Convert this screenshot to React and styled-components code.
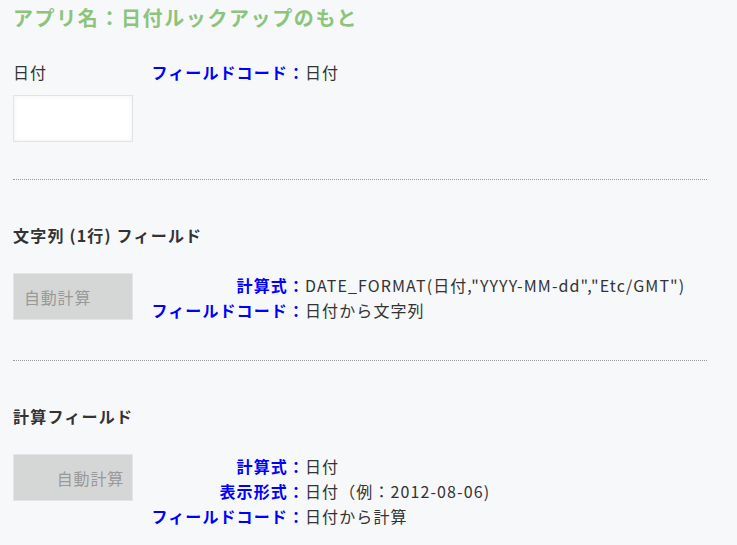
import styled, { createGlobalStyle } from "styled-components";

const GlobalStyle = createGlobalStyle`
  html, body {
    margin: 0;
    padding: 0;
    background: #f7f8fa;
  }
  body {
    font-family: "Noto Sans CJK JP", "Noto Sans", sans-serif;
    color: #333;
  }
`;

const sections = [
  {
    label: "日付",
    box: "input",
    info: [{ key: "フィールドコード", value: "日付" }],
  },
  {
    title: "文字列 (1行) フィールド",
    box: "calc",
    align: "left",
    info: [
      { key: "計算式", value: 'DATE_FORMAT(日付,"YYYY-MM-dd","Etc/GMT")' },
      { key: "フィールドコード", value: "日付から文字列" },
    ],
  },
  {
    title: "計算フィールド",
    box: "calc",
    align: "right",
    info: [
      { key: "計算式", value: "日付" },
      { key: "表示形式", value: "日付（例：2012-08-06)" },
      { key: "フィールドコード", value: "日付から計算" },
    ],
  },
];

const App = () => {
  return (
    <Page>
      <GlobalStyle />
      <AppTitle>アプリ名：日付ルックアップのもと</AppTitle>
      {sections.map((s, i) => (
        <Section key={i} $first={i === 0}>
          {s.title && <SectionTitle>{s.title}</SectionTitle>}
          <Row>
            <Field>
              {s.label && <FieldLabel>{s.label}</FieldLabel>}
              {s.box === "input" ? (
                <InputBox />
              ) : (
                <CalcBox $align={s.align}>自動計算</CalcBox>
              )}
            </Field>
            <Info>
              {s.info.map((it) => (
                <InfoLine key={it.key}>
                  <InfoKey>{it.key}：</InfoKey>
                  <InfoValue>{it.value}</InfoValue>
                </InfoLine>
              ))}
            </Info>
          </Row>
          {i < sections.length - 1 && <Divider />}
        </Section>
      ))}
    </Page>
  );
};

export default App;

const Page = styled.div`
  padding: 4px 0 0 13px;
  width: 694px;
`;

const AppTitle = styled.h1`
  margin: 0;
  font-size: 20px;
  line-height: 28px;
  font-weight: bold;
  letter-spacing: 1.6px;
  color: #8cc47c;
`;

const Section = styled.div`
  padding-top: ${(p) => (p.$first ? "28px" : "43px")};
`;

const SectionTitle = styled.div`
  font-size: 16px;
  line-height: 25px;
  font-weight: bold;
  letter-spacing: 1.2px;
  color: #333;
  margin-bottom: 25px;
`;

const Row = styled.div`
  display: flex;
  align-items: flex-start;
  margin-bottom: 37px;
`;

const Field = styled.div`
  display: flex;
  flex-direction: column;
  width: 120px;
`;

const FieldLabel = styled.div`
  font-size: 16px;
  line-height: 25px;
  letter-spacing: 1px;
  margin-bottom: 10px;
`;

const InputBox = styled.div`
  box-sizing: border-box;
  width: 120px;
  height: 47px;
  background: #fff;
  border: 1px solid #e3e3e3;
  box-shadow: inset 0 0 5px rgba(0, 0, 0, 0.06);
`;

const CalcBox = styled.div`
  box-sizing: border-box;
  width: 120px;
  height: 47px;
  background: #d5d7d6;
  border: 1px solid #e3e5e6;
  color: #999;
  font-size: 16px;
  letter-spacing: 0.8px;
  display: flex;
  align-items: center;
  justify-content: ${(p) => (p.$align === "right" ? "flex-end" : "flex-start")};
  padding: 0 8px 0 10px;
`;

const Info = styled.div`
  display: grid;
  grid-template-columns: 172px auto;
  align-content: start;
`;

const InfoLine = styled.div`
  display: contents;
`;

const InfoKey = styled.span`
  text-align: right;
  font-size: 16px;
  line-height: 25px;
  font-weight: bold;
  letter-spacing: 1.1px;
  color: #0000ff;
  white-space: nowrap;
`;

const InfoValue = styled.span`
  font-size: 16px;
  line-height: 25px;
  letter-spacing: 1.1px;
  color: #333;
  white-space: nowrap;
`;

const Divider = styled.div`
  border-top: 1px dotted #999;
`;
